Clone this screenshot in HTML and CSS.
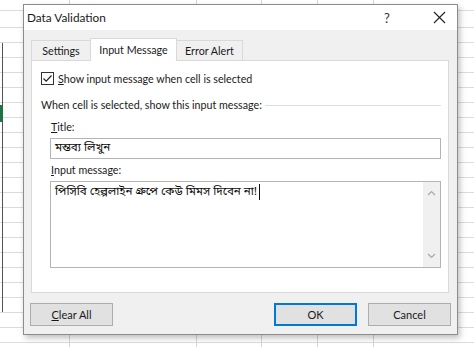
FILE: index.html
```html
<!DOCTYPE html>
<html>
    <head>
        <title>Data Validation</title>
        <meta charset="utf-8">
        <link rel="stylesheet" href="styles.css">
    </head>
    <body>
        <div class="sheet-edge"></div>
        <div class="sheet-sel"></div>

        <div class="dialog">
            <div class="titlebar">
                <span class="title">Data Validation</span>
                <span class="help">?</span>
                <span class="close">
                    <svg width="13" height="13" viewBox="0 0 13 13"><path d="M1 1L12 12M12 1L1 12" stroke="#222" stroke-width="1.1" fill="none"/></svg>
                </span>
            </div>

            <div class="tabs">
                <div class="tab tab-settings">Settings</div>
                <div class="tab tab-active">Input Message</div>
                <div class="tab tab-error">Error Alert</div>
            </div>

            <div class="panel">
                <div class="check-row">
                    <span class="checkbox">
                        <svg width="11" height="11" viewBox="0 0 11 11"><path d="M1.5 5.5L4.2 8.2L9.5 2.5" stroke="#222" stroke-width="1.2" fill="none"/></svg>
                    </span>
                    <span><u>S</u>how input message when cell is selected</span>
                </div>

                <div class="group-head">
                    <span>When cell is selected, show this input message:</span>
                    <span class="group-line"></span>
                </div>

                <div class="field-label"><u>T</u>itle:</div>
                <div class="field bn">মন্তব্য লিখুন</div>

                <div class="field-label label-memo"><u>I</u>nput message:</div>
                <div class="memo">
                    <div class="memo-text bn">পিসিবি হেল্পলাইন গ্রুপে কেউ মিমস দিবেন না!<span class="caret"></span></div>
                    <div class="scroll">
                        <svg width="9" height="6" viewBox="0 0 9 6"><path d="M1 5L4.5 1.5L8 5" stroke="#a8a8a8" stroke-width="1.2" fill="none"/></svg>
                        <svg width="9" height="6" viewBox="0 0 9 6"><path d="M1 1L4.5 4.5L8 1" stroke="#a8a8a8" stroke-width="1.2" fill="none"/></svg>
                    </div>
                </div>
            </div>

            <div class="footer">
                <button class="btn"><u>C</u>lear All</button>
                <span class="spacer"></span>
                <button class="btn btn-default">OK</button>
                <button class="btn">Cancel</button>
            </div>
        </div>
    </body>
</html>
```

FILE: styles.css
```css
body {
    margin: 0;
    width: 474px;
    height: 347px;
    overflow: hidden;
    font-family: Lato, "Noto Sans", sans-serif;
    font-size: 10.7px;
    color: #1a1a1a;
    background-color: #fff;
    background-image:
        repeating-linear-gradient(to bottom, transparent 0px, transparent 14px, #dcdcdc 14px, #dcdcdc 15px),
        linear-gradient(to right, transparent 69px, #d4d4d4 69px, #d4d4d4 70px, transparent 70px),
        linear-gradient(to right, transparent 196px, #d4d4d4 196px, #d4d4d4 197px, transparent 197px),
        linear-gradient(to right, transparent 261px, #d4d4d4 261px, #d4d4d4 262px, transparent 262px),
        linear-gradient(to right, transparent 317px, #d4d4d4 317px, #d4d4d4 318px, transparent 318px),
        linear-gradient(to right, transparent 373px, #d4d4d4 373px, #d4d4d4 374px, transparent 374px);
    background-position: 0 13px, 0 0, 0 0, 0 0, 0 0, 0 0;
    position: relative;
}

.sheet-edge {position: absolute; left: 2px; top: 43px; width: 1px; height: 269px; background: #555;}
.sheet-sel {position: absolute; left: 0; top: 105px; width: 3px; height: 17px; background: #217346;}

.dialog {
    position: absolute;
    left: 23px;
    top: 4px;
    width: 433px;
    height: 329px;
    border: 1px solid #8c8c8c;
    background: #f0f0f0;
    box-shadow: 2px 3px 6px rgba(0, 0, 0, 0.25);
    display: flex;
    flex-direction: column;
}

.titlebar {display: flex; align-items: center; height: 25px; background: #fff; padding-left: 3px;}
.title {font-size: 11.8px; flex: 1;}
.help {width: 20px; font-size: 13px; text-align: center; color: #333; margin-right: 32px;}
.close {width: 20px; margin-right: 8px; display: flex; justify-content: center;}

.tabs {display: flex; align-items: flex-end; height: 30px; padding-left: 7px;}
.tab {box-sizing: border-box; height: 20px; line-height: 19px; text-align: center; white-space: nowrap; border: 1px solid #d9d9d9; border-bottom: none; background: #f0f0f0; color: #1a1a1a;}
.tab-settings {width: 59px; border-right: none;}
.tab-active {width: 87px; height: 23px; line-height: 21px; background: #fff; position: relative; top: 1px;}
.tab-error {width: 66px; border-left: none;}

.panel {
    height: 231px;
    margin: 0 8px 0 7px;
    border: 1px solid #d9d9d9;
    background: #fff;
    padding: 0 7px 0 9px;
}

.check-row {display: flex; align-items: center; gap: 4px; margin-top: 11px; height: 13px;}
.checkbox {width: 11px; height: 11px; border: 1px solid #333; display: flex; align-items: center; justify-content: center;}

.group-head {display: flex; align-items: center; margin-top: 11px; height: 16px;}
.group-line {flex: 1; height: 1px; background: #dcdcdc; margin-left: 3px; margin-top: 3px;}

.field-label {margin: 7px 0 0 10px; height: 16px; line-height: 16px;}
.label-memo {margin-top: 3px;}
.field {
    margin: 3px 0 0 9px;
    height: 19px;
    border: 1px solid #b4b4b4;
    padding-left: 4px;
    line-height: 19px;
}
.bn {font-family: "Noto Sans Bengali", "Lohit Bengali", "FreeSerif", sans-serif; font-size: 11.6px; color: #0a0a0a;}

.memo {
    display: flex;
    margin: 3px 0 0 9px;
    height: 85px;
    border: 1px solid #b4b4b4;
}
.memo-text {flex: 1; padding: 1px 0 0 4px; line-height: 19px;}
.caret {display: inline-block; width: 1px; height: 16px; background: #111; vertical-align: middle; margin-left: 2px;}
.scroll {width: 17px; background: #f0f0f0; display: flex; flex-direction: column; justify-content: space-between; align-items: center; padding: 8px 0;}

.footer {display: flex; align-items: center; padding: 10px 6px 0 6px;}
.spacer {flex: 1;}
.btn {
    width: 83px;
    height: 23px;
    background: #e1e1e1;
    border: 1px solid #adadad;
    font-family: Lato, "Noto Sans", sans-serif;
    font-size: 11px;
    color: #1a1a1a;
    padding: 0;
    margin-left: 11px;
}
.btn:first-child {margin-left: 0;}
.btn-default {border: 2px solid #0078d7;}
```
